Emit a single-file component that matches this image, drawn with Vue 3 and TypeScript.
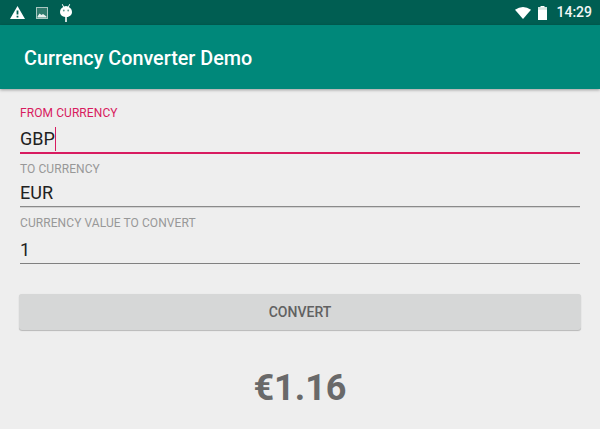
<script setup lang="ts">
interface Field { label: string; value: string; active?: boolean }
const fields: Field[] = [
  { label: 'FROM CURRENCY', value: 'GBP', active: true },
  { label: 'TO CURRENCY', value: 'EUR' },
  { label: 'CURRENCY VALUE TO CONVERT', value: '1' },
]
</script>

<template>
  <div class="screen">
    <div class="status">
      <div class="status-left">
        <svg class="warn" width="15" height="13" viewBox="0 0 15 13"><path fill="#fff" fill-rule="evenodd" d="M7.500 0L15 13H0ZM6.600 4.500v4h1.800v-4ZM6.600 9.700v1.800h1.800V9.700Z"/></svg>
        <svg class="img" width="12" height="12" viewBox="0 0 12 12"><rect x="0.5" y="0.5" width="11" height="11" fill="#2f7a6c" stroke="#a9c7c1" stroke-width="1"/><path fill="#eaf2f0" d="M1.500 9.500L3.500 6.500 5.500 8 7 7l3.500 2.500v1h-9Z"/></svg>
        <svg class="bot" width="12" height="18" viewBox="0 0 12 18"><path fill="#fff" d="M1.800 0.500l.7-.4L4 2.400A5.500 5.500 0 0 1 8 2.400L9.500.1l.7.4L8.800 3A5.800 5.800 0 0 1 12 8c0 2.900-2.200 4.800-5.200 5.100V18H5.200V13.100C2.200 12.800 0 10.900 0 8A5.800 5.800 0 0 1 3.200 3Z"/><circle cx="3.800" cy="6.500" r=".9" fill="#5f9c90"/><circle cx="8.200" cy="6.500" r=".9" fill="#5f9c90"/></svg>
      </div>
      <div class="status-right">
        <svg class="wifi" width="16" height="12" viewBox="0 0 16 12"><path fill="#fff" d="M0 2.800Q8-2.600 16 2.800L8 12Z"/></svg>
        <svg class="batt" width="9" height="14" viewBox="0 0 9 14"><path fill="#fff" d="M2.500 0h4v1.300H9V14H0V1.300h2.500Z"/><rect x="0" y="1.300" width="9" height="2.500" fill="#d5e5e2"/></svg>
        <span class="time">14:29</span>
      </div>
    </div>
    <header class="bar">Currency Converter Demo</header>
    <main class="content">
      <div v-for="f in fields" :key="f.label" class="field" :class="{ active: f.active }">
        <label class="label">{{ f.label }}</label>
        <div class="value">{{ f.value }}<span v-if="f.active" class="caret"></span></div>
      </div>
      <button class="convert">CONVERT</button>
      <div class="result">€1.16</div>
    </main>
  </div>
</template>

<style>
html, body { margin: 0; background: #eeeeee; }
</style>

<style scoped>
.screen {
  width: 600px;
  height: 429px;
  overflow: hidden;
  background: #eeeeee;
  font-family: Roboto, "Liberation Sans", sans-serif;
  display: flex;
  flex-direction: column;
}
.status {
  height: 25px;
  background: #005e52;
  display: flex;
  justify-content: space-between;
  align-items: center;
  color: #fff;
  flex: none;
}
.status-left { display: flex; align-items: center; padding-left: 10px; }
.warn { margin-right: 11px; }
.img { margin-right: 12px; }
.status-right { display: flex; align-items: center; padding-right: 8px; }
.wifi { margin-right: 7px; }
.batt { margin-right: 9px; }
.time { font-size: 14px; font-weight: 500; line-height: 25px; color: #f2f7f6; }
.bar {
  height: 64px;
  flex: none;
  background: #00887a;
  color: #fff;
  font-size: 19.800px;
  font-weight: 500;
  line-height: 68px;
  padding-left: 24px;
  box-shadow: 0 1px 3px rgba(0, 0, 0, 0.35);
  position: relative;
}
.content {
  padding: 17px 20px 0;
  display: flex;
  flex-direction: column;
}
.field { display: flex; flex-direction: column; margin-bottom: 9px; }
.field.active { margin-bottom: 8px; }
.field:nth-child(3) { margin-bottom: 0; }
.label { font-size: 12px; letter-spacing: 0.08px; line-height: 14px; color: #989898; }
.active .label { color: #d81b60; }
.value {
  font-size: 18px;
  line-height: 24px;
  height: 25px;
  color: #212121;
  margin-top: 5px;
  border-bottom: 1px solid #8a8a8a;
  box-shadow: 0 1px 0 #d2d2d2;
}
.field:nth-child(3) .value {
  margin-top: 8px;
  border-bottom-color: #808080;
  box-shadow: none;
}
.active .value {
  margin-top: 7px;
  border-bottom: 2px solid #d81b60;
  box-shadow: none;
}
.caret {
  display: inline-block;
  width: 1px;
  height: 24px;
  background: #d81b60;
  vertical-align: top;
}
.convert {
  margin: 30px -1px 0;
  height: 36px;
  border: none;
  border-radius: 3px;
  background: #d6d7d7;
  color: #616161;
  font-family: inherit;
  font-size: 14px;
  font-weight: 500;
  box-shadow: 0 1px 1px rgba(0, 0, 0, 0.22), 0 0 1px rgba(0, 0, 0, 0.08);
}
.result {
  margin-top: 37px;
  text-align: center;
  font-size: 36px;
  font-weight: 700;
  color: #696969;
  line-height: 42px;
}
</style>
